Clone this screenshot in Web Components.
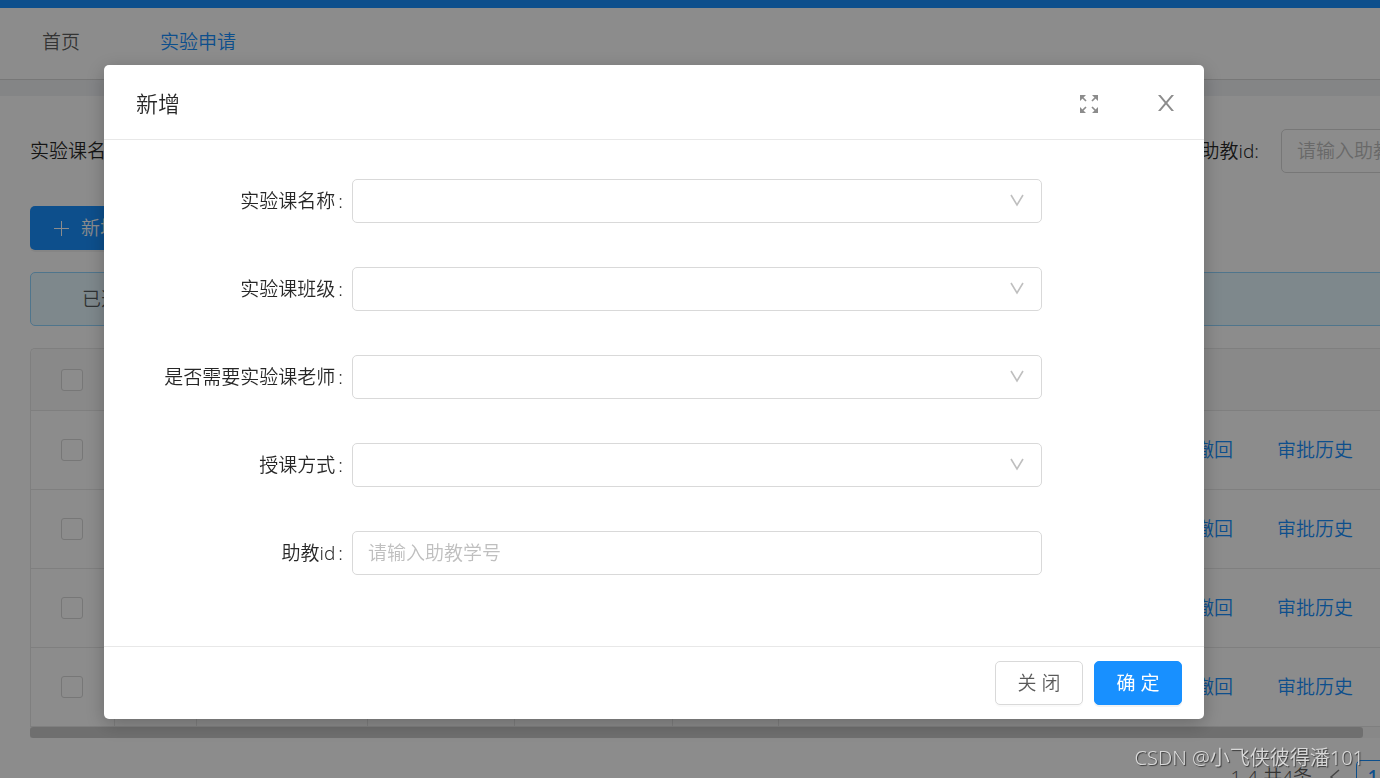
<!DOCTYPE html>
<html lang="zh-CN">
<head>
<meta charset="utf-8">
<title>实验申请</title>
<style>
  html, body { margin: 0; height: 100%; overflow: hidden; background: #fff; }
  body { font: 350 19px/28px "Noto Sans", "Noto Sans CJK SC", sans-serif; color: rgba(0,0,0,.65); }
</style>
</head>
<body>
<app-shell>
  <app-nav slot="nav">
    <nav-link>首页</nav-link>
    <nav-link active>实验申请</nav-link>
  </app-nav>
  <filter-bar></filter-bar>
  <add-button>新增</add-button>
  <info-alert>已选择</info-alert>
  <apply-table rows="4"></apply-table>
  <page-nav></page-nav>
</app-shell>
<modal-dialog heading="新增">
  <form-field label="实验课名称" type="select"></form-field>
  <form-field label="实验课班级" type="select"></form-field>
  <form-field label="是否需要实验课老师" type="select"></form-field>
  <form-field label="授课方式" type="select"></form-field>
  <form-field label="助教id" type="text" placeholder="请输入助教学号"></form-field>
  <ui-button slot="footer">关 闭</ui-button>
  <ui-button slot="footer" primary>确 定</ui-button>
</modal-dialog>
<water-mark>CSDN @小飞侠彼得潘101</water-mark>

<script>
const base = `*{box-sizing:border-box}:host([hidden]){display:none}
  button,input,select{font:inherit;color:inherit;margin:0}`;
const inputCss = `
  input[type=text],select{display:block;width:100%;height:44px;padding:0 15px;background:#fff;
    border:1px solid #d9d9d9;border-radius:5px;outline:0;appearance:none}
  input::placeholder{color:#bfbfbf;opacity:1}`;

function define(name, render) {
  customElements.define(name, class extends HTMLElement {
    constructor() { super(); this.attachShadow({ mode: 'open' }); }
    connectedCallback() { this.shadowRoot.innerHTML = render(this); }
  });
}

define('app-shell', () => `<style>${base}
  :host{display:block;height:100vh;overflow:hidden}
  .bar{height:8px;background:#1890ff}
  main{border-top:16px solid #f0f2f5;padding:33px 0 0 30px;margin-right:-20px;display:flex;flex-direction:column}
  </style><div class="bar"></div><slot name="nav"></slot><main><slot></slot></main>`);

define('app-nav', () => `<style>${base}
  :host{display:block}
  nav{display:flex;gap:80px;height:72px;padding:0 42px 4px;align-items:center;border-bottom:1px solid #d9d9d9}
  </style><nav><slot></slot></nav>`);

define('nav-link', el => `<style>${base}
  :host{display:block} a{color:inherit;text-decoration:none}
  :host([active]) a{color:#1890ff}
  </style><a href="#"${el.hasAttribute('active') ? ' aria-current="page"' : ''}><slot></slot></a>`);

define('filter-bar', () => `<style>${base}${inputCss}
  :host{display:flex;align-items:center;justify-content:space-between;height:44px;color:rgba(0,0,0,.85)}
  div{display:flex;align-items:center;gap:22px}
  label{white-space:nowrap}
  .first input{width:240px}.last input{width:119px}
  </style>
  <div class="first"><label for="course">实验课名称:</label><input type="text" id="course"></div>
  <div class="last"><label for="ta">助教id:</label><input type="text" id="ta" placeholder="请输入助教id"></div>`);

define('add-button', () => `<style>${base}
  :host{display:block;margin-top:33px}
  button{display:flex;align-items:center;gap:11px;height:44px;padding:0 22px;border:0;border-radius:5px;
    background:#1890ff;color:#fff;box-shadow:0 2px 0 rgba(0,0,0,.05)}
  svg{width:18px;height:18px}
  </style><button type="button"><svg viewBox="0 0 18 18" stroke="#fff" aria-hidden="true"><path d="M9.5 2v15M2 9.5h15"/></svg><slot></slot></button>`);

define('info-alert', () => `<style>${base}
  :host{display:flex;align-items:center;height:54px;margin-top:22px;padding:0 51px;
    background:#e6f7ff;border:1px solid #91d5ff;border-radius:5px;box-sizing:border-box}
  </style><slot></slot>`);

define('apply-table', el => {
  const check = name => `<input type="checkbox" aria-label="${name}">`;
  const row = i => `<tr><td>${check('选择第' + i + '行')}</td><td></td><td></td><td></td><td></td><td></td>
    <td class="act"><a href="#">撤回</a><a href="#">审批历史</a></td></tr>`;
  return `<style>${base}
  :host{display:block;margin-top:22px}
  table{width:100%;table-layout:fixed;border-collapse:separate;border-spacing:0;border:solid #e8e8e8;border-width:1px 0 0 1px;border-radius:5px 0 0 0}
  th,td{padding:0;border:solid #e8e8e8;border-width:0 1px 1px 0;text-align:center}
  th{height:62px;background:#fafafa;border-right-color:transparent} td{height:79px}
  th:first-child{border-radius:5px 0 0 0}
  td:last-child{border-right:0} td:first-child,th:first-child{border-right-color:#e8e8e8}
  .act{text-align:right;padding-right:47px}
  a{color:#1890ff;text-decoration:none;margin-left:44px}
  input{appearance:none;display:block;width:22px;height:22px;margin:0 30px;border:1px solid #d9d9d9;border-radius:3px;background:#fff}
  .track{height:11px;padding-right:37px;background:#f8f8f8}
  .thumb{height:11px;background:#cbcbcb;border-radius:3px}
  </style>
  <table><colgroup><col style="width:84px"><col style="width:82px"><col style="width:171px"><col style="width:147px"><col style="width:158px"><col style="width:106px"><col></colgroup>
  <thead><tr><th>${check('全选')}</th><th></th><th></th><th></th><th></th><th></th><th></th></tr></thead>
  <tbody>${Array.from({ length: +el.getAttribute('rows') }, (_, i) => row(i + 1)).join('')}</tbody></table>
  <div class="track"><div class="thumb"></div></div>`;
});

define('page-nav', () => `<style>${base}
  :host{display:flex;justify-content:flex-end;align-items:center;margin-top:22px}
  button{width:44px;height:34px;padding:0;background:#fff;border:1px solid #1890ff;border-radius:5px;color:#1890ff;font-weight:500}
  [aria-current]{padding-right:10px}
  .prev{border:0;display:grid;place-items:center}
  svg{width:16px;height:16px}
  </style><span>1-4 共4条</span>
  <button class="prev" type="button" aria-label="上一页"><svg viewBox="0 0 16 16" fill="none" stroke="#808080" stroke-width="1.5"><path d="M13 1 5 8l8 7"/></svg></button>
  <button type="button" aria-current="page">1</button>`);

define('modal-dialog', el => `<style>${base}
  :host{position:fixed;inset:0;background:rgba(0,0,0,.45);display:block;overflow:hidden}
  section{margin:65px 176px 0 104px;background:#fff;border-radius:5px;box-shadow:0 5px 20px rgba(0,0,0,.25)}
  header{display:flex;align-items:center;height:75px;padding:2px 26px 0 32px;border-bottom:1px solid #e8e8e8}
  h2{flex:1;margin:0;font-size:22px;line-height:32px;font-weight:350;color:rgba(0,0,0,.85)}
  header button{display:grid;place-items:center;width:24px;height:24px;padding:0;border:0;background:none}
  .tools{display:flex;gap:53px}
  svg{display:block;width:20px;height:20px}
  form{display:grid;gap:44px;padding:39px 0 71px}
  footer{display:flex;justify-content:flex-end;gap:11px;padding:14px 22px;border-top:1px solid #e8e8e8}
  </style>
  <section role="dialog" aria-label="${el.getAttribute('heading')}">
  <header><h2>${el.getAttribute('heading')}</h2><div class="tools">
    <button type="button" aria-label="全屏"><svg viewBox="0 0 20 20" fill="#8c8c8c" stroke="#8c8c8c" stroke-width="1.7">
      <path stroke="none" d="M1 2h6L1 8zM19 2v6l-6-6zM1 20v-6l6 6zM19 20h-6l6-6z"/><path d="m3 4 4 4M17 4l-4 4M3 18l4-4M17 18l-4-4"/></svg></button>
    <button type="button" aria-label="关闭"><svg viewBox="0 0 20 20" fill="#8c8c8c"><path d="M2 2h2.500l5.500 6.500 5.500-6.500H18l-6.700 8L18 18h-2.500L10 11.500 4.500 18H2l6.700-8z"/></svg></button>
  </div></header>
  <form><slot></slot></form>
  <footer><slot name="footer"></slot></footer></section>`);

define('form-field', el => {
  const select = el.getAttribute('type') === 'select';
  const control = select
    ? `<select id="c"><option value=""></option></select><svg viewBox="0 0 16 16" fill="none" stroke="#bfbfbf" stroke-width="1.6" aria-hidden="true"><path d="m2 2 6 10 6-10"/></svg>`
    : `<input id="c" type="text" placeholder="${el.getAttribute('placeholder')}">`;
  return `<style>${base}${inputCss}
  :host{display:grid;grid-template-columns:248fr 690fr 162fr;align-items:center}
  label{text-align:right;padding-right:9px;color:rgba(0,0,0,.85);white-space:nowrap}
  label::after{content:":";margin-left:3px}
  .box{position:relative}
  svg{position:absolute;right:17px;top:14px;width:16px;height:16px;pointer-events:none}
  </style><label for="c">${el.getAttribute('label')}</label><div class="box">${control}</div>`;
});

define('ui-button', () => `<style>${base}
  :host{display:block}
  button{display:block;height:44px;min-width:88px;padding:0 20px;background:#fff;border:1px solid #d9d9d9;border-radius:5px;box-shadow:0 2px 0 rgba(0,0,0,.02)}
  :host([primary]) button{background:#1890ff;border-color:#1890ff;color:#fff;font-weight:400;box-shadow:0 2px 0 rgba(0,0,0,.05)}
  </style><button type="button"><slot></slot></button>`);

define('water-mark', () => `<style>${base}
  :host{position:fixed;right:16px;bottom:6px;color:#d9d9d9;font-size:20px;line-height:28px;white-space:nowrap;
    text-shadow:1px 1px 1px rgba(0,0,0,.6);pointer-events:none}
  </style><slot></slot>`);
</script>
</body>
</html>
